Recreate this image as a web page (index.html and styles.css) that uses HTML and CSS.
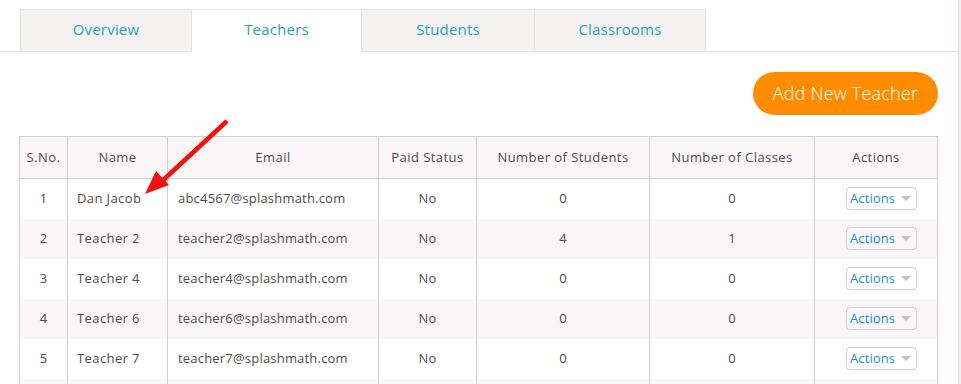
FILE: index.html
```html
<!DOCTYPE html>
<html>
<head>
<meta charset="utf-8">
<link rel="stylesheet" href="styles.css">
</head>
<body>
<div class="page">
  <div class="tabs">
    <div class="tab t1">Overview</div>
    <div class="tab t2 active">Teachers</div>
    <div class="tab t3">Students</div>
    <div class="tab t4">Classrooms</div>
  </div>
  <div class="toolbar">
    <button class="add-btn">Add New Teacher</button>
  </div>
  <table class="grid">
    <colgroup>
      <col class="c1"><col class="c2"><col class="c3"><col class="c4"><col class="c5"><col class="c6"><col class="c7">
    </colgroup>
    <thead>
      <tr><th>S.No.</th><th>Name</th><th>Email</th><th>Paid Status</th><th>Number of Students</th><th>Number of Classes</th><th>Actions</th></tr>
    </thead>
    <tbody>
      <tr><td class="ctr">1</td><td class="nm">Dan Jacob</td><td>abc4567@splashmath.com</td><td class="ctr">No</td><td class="ctr">0</td><td class="ctr">0</td><td class="ctr"><span class="act">Actions<i class="caret"></i></span></td></tr>
      <tr><td class="ctr">2</td><td class="nm">Teacher 2</td><td>teacher2@splashmath.com</td><td class="ctr">No</td><td class="ctr">4</td><td class="ctr">1</td><td class="ctr"><span class="act">Actions<i class="caret"></i></span></td></tr>
      <tr><td class="ctr">3</td><td class="nm">Teacher 4</td><td>teacher4@splashmath.com</td><td class="ctr">No</td><td class="ctr">0</td><td class="ctr">0</td><td class="ctr"><span class="act">Actions<i class="caret"></i></span></td></tr>
      <tr><td class="ctr">4</td><td class="nm">Teacher 6</td><td>teacher6@splashmath.com</td><td class="ctr">No</td><td class="ctr">0</td><td class="ctr">0</td><td class="ctr"><span class="act">Actions<i class="caret"></i></span></td></tr>
      <tr><td class="ctr">5</td><td class="nm">Teacher 7</td><td>teacher7@splashmath.com</td><td class="ctr">No</td><td class="ctr">0</td><td class="ctr">0</td><td class="ctr"><span class="act">Actions<i class="caret"></i></span></td></tr>
      <tr><td></td><td></td><td></td><td></td><td></td><td></td><td></td></tr>
    </tbody>
  </table>
  <svg class="arrow" width="100" height="90" viewBox="0 0 100 90">
    <line x1="92" y1="5" x2="25" y2="67" stroke="#f50f0f" stroke-width="4.5"/>
    <polygon points="10,78 21,55 34,69" fill="#f50f0f"/>
  </svg>
</div>
</body>
</html>
```

FILE: styles.css
```css
html, body {
  margin: 0;
  padding: 0;
}
body {
  background: #f5f0ec;
  width: 961px;
  height: 384px;
  overflow: hidden;
  font-family: "Open Sans", "Liberation Sans", sans-serif;
}
.page {
  position: relative;
  width: 958px;
  height: 384px;
  overflow: hidden;
  background: #fff;
  border-right: 1px solid #e6dfda;
}
.tabs {
  display: flex;
  padding: 9px 0 0 20px;
  height: 42px;
  border-bottom: 1px solid #e3e3e3;
}
.tab {
  box-sizing: border-box;
  height: 43px;
  display: flex;
  align-items: center;
  justify-content: center;
  background: #f3f2f1;
  border: 1px solid #e3e3e3;
  border-left: none;
  color: #29a2c0;
  font-size: 15px;
  letter-spacing: 0.2px;
  padding-bottom: 4px;
}
.tab.t1 { width: 172px; border-left: 1px solid #e3e3e3; }
.tab.t2 { width: 170px; }
.tab.t3 { width: 173px; }
.tab.t4 { width: 171px; }
.tab.active {
  background: #fff;
  border-bottom-color: #fff;
}
.toolbar {
  display: flex;
  justify-content: flex-end;
  padding: 20px 20px 0 0;
}
.add-btn {
  width: 185px;
  height: 43px;
  border: none;
  border-radius: 22px;
  background: #ff8c00;
  color: #fff;
  font-family: "Open Sans", "Liberation Sans", sans-serif;
  font-size: 18px;
  font-weight: 300;
  letter-spacing: 0.2px;
  padding: 0 0 1px 0;
  cursor: pointer;
}
.grid {
  margin: 21px 0 0 19px;
  width: 919px;
  border-collapse: collapse;
  table-layout: fixed;
  font-size: 13px;
  letter-spacing: 0.2px;
  color: #4d4d4d;
}
.c1 { width: 48px; }
.c2 { width: 100px; }
.c3 { width: 211px; }
.c4 { width: 98px; }
.c5 { width: 173px; }
.c6 { width: 165px; }
.c7 { width: 123px; }
.grid th {
  height: 40px;
  padding: 0 0 1px 0;
  font-weight: 400;
  letter-spacing: 0.45px;
  background: #f8f6f6;
  border: 1px solid #cfcfcf;
  text-align: center;
}
.grid td {
  height: 38px;
  padding: 0 0 2px 10px;
  border-left: 1px solid #cfcfcf;
  border-right: 1px solid #cfcfcf;
  white-space: nowrap;
}
.grid td.nm {
  padding-left: 9px;
  letter-spacing: 0.4px;
}
.grid td.ctr {
  text-align: center;
  padding: 0 0 2px 0;
}
.grid tbody tr:nth-child(even) td {
  background: #f8f6f6;
}
.act {
  display: inline-flex;
  align-items: center;
  box-sizing: border-box;
  width: 71px;
  height: 23px;
  border: 1px solid #d0d0d0;
  border-radius: 4px;
  padding-left: 3px;
  color: #1c8fd9;
  font-size: 13px;
  letter-spacing: 0.1px;
  margin-left: 11px;
  vertical-align: middle;
}
.caret {
  display: inline-block;
  width: 0;
  height: 0;
  margin-left: 6px;
  border-left: 5px solid transparent;
  border-right: 5px solid transparent;
  border-top: 5px solid #c2c2c2;
}
.arrow {
  position: absolute;
  left: 135px;
  top: 116px;
}
```
